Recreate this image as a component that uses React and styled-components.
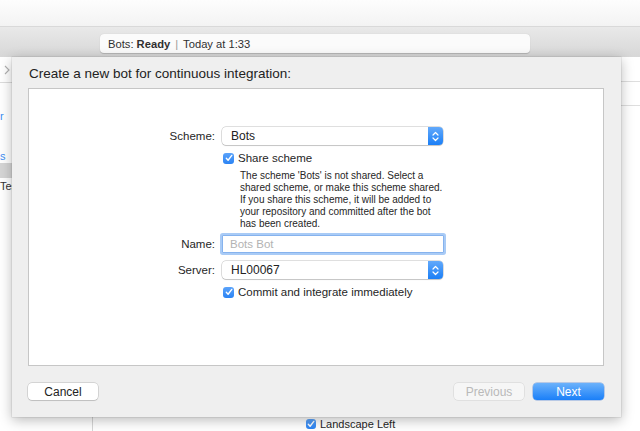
import React from 'react';
import styled, { createGlobalStyle } from 'styled-components';

const GlobalStyle = createGlobalStyle`
  html, body {
    margin: 0;
    padding: 0;
    width: 640px;
    height: 431px;
    overflow: hidden;
    background: #ffffff;
    font-family: "Liberation Sans", Arial, sans-serif;
    color: #262626;
  }
`;

const Window = styled.div`
  position: relative;
  width: 640px;
  height: 431px;
  display: flex;
  flex-direction: column;
  overflow: hidden;
`;

const TitleArea = styled.div`
  height: 26px;
  background: linear-gradient(#fdfdfd, #f3f3f3);
`;

const Toolbar = styled.div`
  height: 31px;
  display: flex;
  align-items: flex-start;
  padding-top: 7px;
  padding-left: 100px;
  box-sizing: border-box;
  background: linear-gradient(#e9e9e9, #d7d7d7);
  border-top: 1px solid #d9d9d9;
`;

const StatusPill = styled.div`
  width: 430px;
  height: 19px;
  box-sizing: border-box;
  display: flex;
  align-items: center;
  padding-left: 8px;
  gap: 5px;
  background: #fbfbfb;
  border-radius: 4px;
  box-shadow: 0 0.5px 1px rgba(0, 0, 0, 0.18);
  font-size: 11.2px;
  color: #303030;
`;

const Sep = styled.span`
  color: #9a9a9a;
`;

const Body = styled.div`
  flex: 1;
  display: flex;
  min-height: 0;
`;

const Sidebar = styled.div`
  width: 92px;
  border-right: 1px solid #d6d6d6;
  display: flex;
  flex-direction: column;
`;

const NavRow = styled.div`
  height: 25px;
  border-bottom: 1px solid #dcdcdc;
  display: flex;
  align-items: center;
  padding-left: 4px;
`;

const SideItem = styled.div`
  height: 15px;
  margin-top: ${p => p.mt || 0}px;
  display: flex;
  align-items: center;
  background: ${p => (p.selected ? '#d5d5d5' : 'transparent')};
  color: ${p => (p.blue ? '#3f8ef2' : '#333')};
  font-size: 11px;
  white-space: nowrap;
  overflow: hidden;
`;

const Main = styled.div`
  flex: 1;
  display: flex;
  flex-direction: column;
`;

const MainRow = styled.div`
  height: ${p => p.h}px;
  border-bottom: 1px solid #dedede;
`;

const BottomRow = styled.div`
  margin-top: auto;
  height: 14px;
  display: flex;
  align-items: center;
  gap: 4px;
  padding-left: 213px;
  font-size: 11px;
  color: #262626;
`;

const Sheet = styled.div`
  position: absolute;
  top: 57px;
  left: 12px;
  width: 609px;
  height: 360px;
  box-sizing: border-box;
  padding: 0 17px 0 16px;
  background: #efefef;
  box-shadow: 0 3px 12px rgba(0, 0, 0, 0.28), 0 0 0 0.5px rgba(0, 0, 0, 0.12);
  display: flex;
  flex-direction: column;
`;

const SheetTitle = styled.div`
  padding-top: 9px;
  line-height: 16px;
  font-size: 13.5px;
  padding-left: 1px;
  margin-bottom: 6px;
  color: #222;
`;

const Panel = styled.div`
  height: 278px;
  box-sizing: border-box;
  background: #ffffff;
  border: 1px solid #c6c6c6;
  padding-top: 38px;
  display: flex;
  flex-direction: column;
`;

const FormRow = styled.div`
  display: flex;
  align-items: center;
  gap: 7px;
  margin-top: ${p => p.mt || 0}px;
`;

const Label = styled.div`
  width: 186px;
  text-align: right;
  font-size: 11.5px;
  color: #262626;
`;

const Popup = styled.div`
  width: 221px;
  height: 18px;
  box-sizing: border-box;
  display: flex;
  align-items: stretch;
  background: #ffffff;
  border-radius: 4px;
  box-shadow: 0 0 0 0.5px rgba(0, 0, 0, 0.25), 0 1px 1px rgba(0, 0, 0, 0.12);
`;

const PopupText = styled.div`
  flex: 1;
  display: flex;
  align-items: center;
  padding-left: 9px;
  font-size: 12px;
  color: #222;
`;

const PopupArrows = styled.div`
  width: 15px;
  display: flex;
  align-items: center;
  justify-content: center;
  border-radius: 0 4px 4px 0;
  background: linear-gradient(#62a9fb, #1b7ff6);
`;

const TextField = styled.div`
  width: 222px;
  height: 18px;
  box-sizing: border-box;
  display: flex;
  align-items: center;
  padding-left: 7px;
  border: 1px solid #86b3ee;
  box-shadow: 0 0 0 2px #a9cbf6;
  border-radius: 1px;
  font-size: 11.5px;
  color: #b3b3b3;
  background: #fff;
`;

const Indented = styled.div`
  margin-left: 194px;
  margin-top: ${p => p.mt || 0}px;
`;

const CheckRow = styled.div`
  display: flex;
  align-items: center;
  gap: 4px;
  height: 14px;
  font-size: 11.5px;
  color: #262626;
`;

const Box = styled.span`
  width: ${p => p.size || 11}px;
  height: ${p => p.size || 11}px;
  border-radius: 3px;
  background: linear-gradient(#5ba3fa, #2a83f4);
  display: inline-flex;
  align-items: center;
  justify-content: center;
  flex-shrink: 0;
`;

const Help = styled.div`
  margin-left: 211px;
  margin-top: 5px;
  font-size: 10px;
  line-height: 12px;
  color: #262626;
  white-space: nowrap;
`;

const Footer = styled.div`
  display: flex;
  align-items: center;
  margin-top: 17px;
  gap: 9px;
`;

const Button = styled.div`
  width: ${p => p.w || 70}px;
  height: 17px;
  box-sizing: border-box;
  display: flex;
  align-items: center;
  justify-content: center;
  border-radius: 4px;
  font-size: 12px;
  color: ${p => (p.primary ? '#ffffff' : p.disabled ? '#b9b9b9' : '#222')};
  background: ${p =>
    p.primary ? 'linear-gradient(#6cb2fb, #1a7ff8)' : p.disabled ? '#f6f6f6' : '#ffffff'};
  box-shadow: ${p =>
    p.primary
      ? '0 0 0 0.5px rgba(20, 90, 200, 0.5)'
      : p.disabled
      ? '0 0 0 0.5px rgba(0, 0, 0, 0.12)'
      : '0 0 0 0.5px rgba(0, 0, 0, 0.22), 0 1px 1px rgba(0, 0, 0, 0.1)'};
  margin-left: ${p => (p.push ? 'auto' : '0')};
`;

const Check = () => (
  <svg width="8" height="8" viewBox="0 0 8 8">
    <path d="M1.3 4.3 L3.1 6.2 L6.8 1.4" fill="none" stroke="#fff" strokeWidth="1.4" strokeLinecap="round" strokeLinejoin="round" />
  </svg>
);

const Arrows = () => (
  <svg width="7" height="11" viewBox="0 0 7 11">
    <path d="M1 4 L3.5 1.5 L6 4 M1 7 L3.5 9.5 L6 7" fill="none" stroke="#fff" strokeWidth="1.2" strokeLinecap="round" strokeLinejoin="round" />
  </svg>
);

const Chevron = () => (
  <svg width="6" height="10" viewBox="0 0 6 10">
    <path d="M1 1 L5 5 L1 9" fill="none" stroke="#b0b0b0" strokeWidth="1.1" />
  </svg>
);

const helpLines = [
  "The scheme 'Bots' is not shared. Select a",
  'shared scheme, or make this scheme shared.',
  'If you share this scheme, it will be added to',
  'your repository and committed after the bot',
  'has been created.',
];

export default function App() {
  return (
    <>
      <GlobalStyle />
      <Window>
        <TitleArea />
        <Toolbar>
          <StatusPill>
            <span>
              Bots: <b>Ready</b>
            </span>
            <Sep>|</Sep>
            <span>Today at 1:33</span>
          </StatusPill>
        </Toolbar>
        <Body>
          <Sidebar>
            <NavRow>
              <Chevron />
            </NavRow>
            <SideItem blue mt={25}>r</SideItem>
            <SideItem blue mt={25}>s</SideItem>
            <SideItem selected />
            <SideItem>Tests</SideItem>
          </Sidebar>
          <Main>
            <MainRow h={24} />
            <MainRow h={23} />
            <BottomRow>
              <Box size={10}>
                <Check />
              </Box>
              <span>Landscape Left</span>
            </BottomRow>
          </Main>
        </Body>

        <Sheet>
          <SheetTitle>Create a new bot for continuous integration:</SheetTitle>
          <Panel>
            <FormRow>
              <Label>Scheme:</Label>
              <Popup>
                <PopupText>Bots</PopupText>
                <PopupArrows>
                  <Arrows />
                </PopupArrows>
              </Popup>
            </FormRow>
            <Indented mt={6}>
              <CheckRow>
                <Box>
                  <Check />
                </Box>
                <span>Share scheme</span>
              </CheckRow>
            </Indented>
            <Help>
              {helpLines.map(line => (
                <div key={line}>{line}</div>
              ))}
            </Help>
            <FormRow mt={5}>
              <Label>Name:</Label>
              <TextField>Bots Bot</TextField>
            </FormRow>
            <FormRow mt={8}>
              <Label>Server:</Label>
              <Popup>
                <PopupText>HL00067</PopupText>
                <PopupArrows>
                  <Arrows />
                </PopupArrows>
              </Popup>
            </FormRow>
            <Indented mt={6}>
              <CheckRow>
                <Box>
                  <Check />
                </Box>
                <span>Commit and integrate immediately</span>
              </CheckRow>
            </Indented>
          </Panel>
          <Footer>
            <Button>Cancel</Button>
            <Button disabled push>Previous</Button>
            <Button primary w={71}>Next</Button>
          </Footer>
        </Sheet>
      </Window>
    </>
  );
}
